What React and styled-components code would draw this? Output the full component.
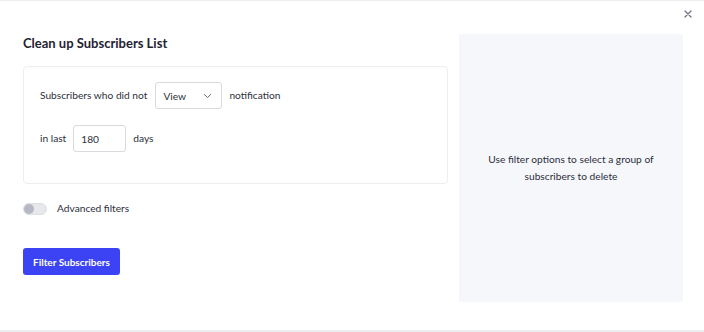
import React from "react";
import styled, { createGlobalStyle } from "styled-components";

const GlobalStyle = createGlobalStyle`
  html, body {
    margin: 0;
    padding: 0;
    background: #eceef1;
    font-family: Lato, "Noto Sans", sans-serif;
  }
`;

function App() {
  return (
    <>
      <GlobalStyle />
      <Modal>
        <CloseButton aria-label="Close">
          <svg width="8" height="8" viewBox="0 0 8 8">
            <path d="M1 1L7 7M7 1L1 7" stroke="#6b6f80" strokeWidth="1.2" strokeLinecap="round" />
          </svg>
        </CloseButton>
        <LeftColumn>
          <Title>Clean up Subscribers List</Title>
          <FilterCard>
            <Row>
              <Label>Subscribers who did not</Label>
              <Select>
                <span>View</span>
                <svg width="9" height="6" viewBox="0 0 9 6">
                  <path d="M1 1.2L4.5 4.5L8 1.2" fill="none" stroke="#6b6f80" strokeWidth="1" />
                </svg>
              </Select>
              <Label>notification</Label>
            </Row>
            <Row>
              <Label>in last</Label>
              <NumberInput defaultValue="180" />
              <Label>days</Label>
            </Row>
          </FilterCard>
          <ToggleRow>
            <Toggle>
              <Knob />
            </Toggle>
            <Label>Advanced filters</Label>
          </ToggleRow>
          <PrimaryButton>Filter Subscribers</PrimaryButton>
        </LeftColumn>
        <EmptyPanel>
          <EmptyText>Use filter options to select a group of subscribers to delete</EmptyText>
        </EmptyPanel>
      </Modal>
    </>
  );
}

export default App;

const Modal = styled.div`
  position: relative;
  box-sizing: border-box;
  margin-top: 1px;
  height: 329px;
  background: #fff;
  display: flex;
  gap: 11px;
  padding: 33px 21px 0 23px;
  align-items: flex-start;
`;

const CloseButton = styled.button`
  position: absolute;
  top: 6px;
  right: 9px;
  width: 14px;
  height: 14px;
  padding: 0;
  border: none;
  background: none;
  display: flex;
  align-items: center;
  justify-content: center;
  cursor: pointer;
`;

const LeftColumn = styled.div`
  width: 425px;
  display: flex;
  flex-direction: column;
  align-items: flex-start;
`;

const Title = styled.h2`
  margin: 0;
  font-size: 13px;
  line-height: 18px;
  font-weight: 700;
  color: #1f2333;
`;

const FilterCard = styled.div`
  box-sizing: border-box;
  width: 100%;
  height: 118px;
  margin-top: 14px;
  border: 1px solid #eceef2;
  border-radius: 4px;
  padding: 15px 16px;
  display: flex;
  flex-direction: column;
  gap: 16px;
`;

const Row = styled.div`
  display: flex;
  align-items: center;
  gap: 7px;
`;

const Label = styled.span`
  font-size: 10.2px;
  line-height: 15px;
  color: #2c2f3b;
`;

const Select = styled.div`
  box-sizing: border-box;
  width: 67px;
  height: 27px;
  margin-left: 1px;
  border: 1px solid #d8dae0;
  border-radius: 3px;
  display: flex;
  align-items: center;
  justify-content: space-between;
  padding: 0 9px 0 7px;
  font-size: 10.2px;
  color: #2c2f3b;
`;

const NumberInput = styled.input`
  box-sizing: border-box;
  width: 53px;
  height: 27px;
  border: 1px solid #d8dae0;
  border-radius: 3px;
  padding: 0 7px;
  font-family: Lato, "Noto Sans", sans-serif;
  font-size: 10.2px;
  color: #2c2f3b;
  outline: none;
`;

const ToggleRow = styled.div`
  display: flex;
  align-items: center;
  gap: 10px;
  margin-top: 17px;
`;

const Toggle = styled.div`
  box-sizing: border-box;
  width: 24px;
  height: 12px;
  border-radius: 6px;
  background: #e7e8ec;
  border: 1px solid #dcdee3;
  display: flex;
  align-items: center;
  padding: 0;
`;

const Knob = styled.div`
  width: 10px;
  height: 10px;
  border-radius: 50%;
  background: #b6b8c3;
`;

const PrimaryButton = styled.button`
  margin-top: 32px;
  width: 97px;
  height: 27px;
  border: none;
  border-radius: 3px;
  background: #3b43f5;
  color: #fff;
  font-family: Lato, "Noto Sans", sans-serif;
  font-size: 10px;
  font-weight: 700;
  cursor: pointer;
  padding: 0;
`;

const EmptyPanel = styled.div`
  width: 224px;
  height: 268px;
  background: #f6f7fb;
  display: flex;
  align-items: center;
  justify-content: center;
  padding: 0 28px;
  box-sizing: border-box;
`;

const EmptyText = styled.p`
  margin: 0;
  text-align: center;
  font-size: 10.2px;
  line-height: 17px;
  color: #2c2f3b;
`;
